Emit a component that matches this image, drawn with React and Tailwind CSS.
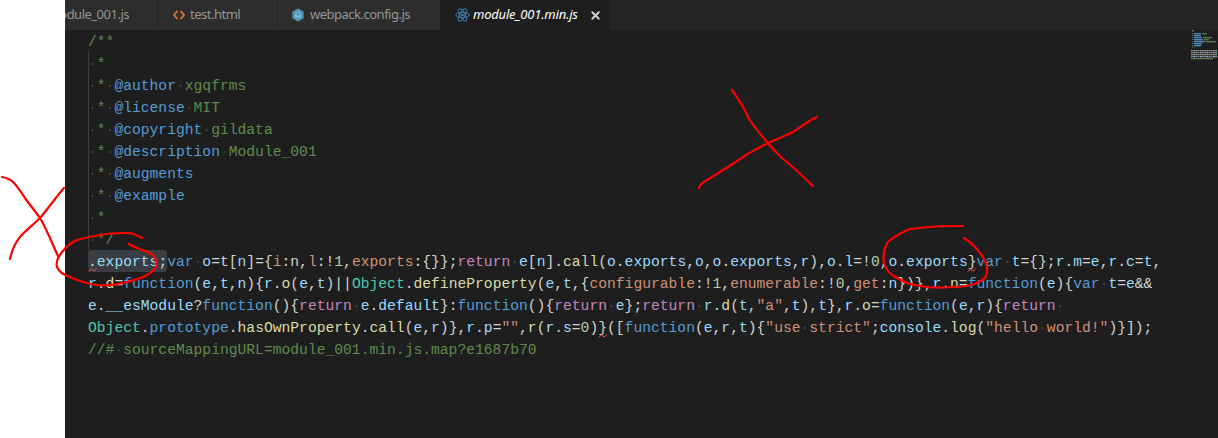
import React from "react";
import { X } from "lucide-react";

// token colours
const P = "text-[#d4d4d4]";
const V = "text-[#9cdcfe]";
const K = "text-[#569cd6]";
const F = "text-[#dcdcaa]";
const S = "text-[#ce9178]";
const R = "text-[#c586c0]";
const C = "text-[#4ec9b0]";
const N = "text-[#b5cea8]";
const G = "text-[#608b4e]";
const W = "text-[#454545]";

const docLines = [
  [[W, "·"], [G, "*"]],
  [[W, "·"], [G, "*"], [W, "·"], [K, "@author"], [W, "·"], [G, "xgqfrms"]],
  [[W, "·"], [G, "*"], [W, "·"], [K, "@license"], [W, "·"], [G, "MIT"]],
  [[W, "·"], [G, "*"], [W, "·"], [K, "@copyright"], [W, "·"], [G, "gildata"]],
  [[W, "·"], [G, "*"], [W, "·"], [K, "@description"], [W, "·"], [G, "Module_001"]],
  [[W, "·"], [G, "*"], [W, "·"], [K, "@augments"]],
  [[W, "·"], [G, "*"], [W, "·"], [K, "@example"]],
  [[W, "·"], [G, "*"]],
  [[W, "·"], [G, "*/"]],
];

const codeLines = [
  [
    [V, "o"], [P, "=t["], [V, "n"], [P, "]={"], [S, "i"], [P, ":n,"], [S, "l"], [P, ":!"], [N, "1"], [P, ","],
    [S, "exports"], [P, ":{}};"], [R, "return"], [W, "·"], [V, "e"], [P, "["], [V, "n"], [P, "]."], [F, "call"],
    [P, "("], [V, "o"], [P, "."], [V, "exports"], [P, ","], [V, "o"], [P, ","], [V, "o"], [P, "."], [V, "exports"],
    [P, ","], [V, "r"], [P, "),"], [V, "o"], [P, "."], [V, "l"], [P, "=!"], [N, "0"], [P, ","], [V, "o"], [P, "."],
    [V, "exports"], [P, "}"], [K, "var"], [W, "·"], [V, "t"], [P, "={};"], [V, "r"], [P, "."], [V, "m"], [P, "="],
    [V, "e"], [P, ","], [V, "r"], [P, "."], [V, "c"], [P, "="], [V, "t"], [P, ","],
  ],
  [
    [V, "r"], [P, "."], [F, "d"], [P, "="], [K, "function"], [P, "("], [V, "e"], [P, ","], [V, "t"], [P, ","], [V, "n"],
    [P, "){"], [V, "r"], [P, "."], [F, "o"], [P, "("], [V, "e"], [P, ","], [V, "t"], [P, ")||"], [C, "Object"], [P, "."],
    [F, "defineProperty"], [P, "("], [V, "e"], [P, ","], [V, "t"], [P, ",{"], [S, "configurable"], [P, ":!"], [N, "1"],
    [P, ","], [S, "enumerable"], [P, ":!"], [N, "0"], [P, ","], [S, "get"], [P, ":"], [V, "n"], [P, "})},"], [V, "r"],
    [P, "."], [F, "n"], [P, "="], [K, "function"], [P, "("], [V, "e"], [P, "){"], [K, "var"], [W, "·"], [V, "t"], [P, "="],
    [V, "e"], [P, "&&"],
  ],
  [
    [V, "e"], [P, "."], [V, "__esModule"], [P, "?"], [K, "function"], [P, "(){"], [R, "return"], [W, "·"], [V, "e"], [P, "."],
    [V, "default"], [P, "}:"], [K, "function"], [P, "(){"], [R, "return"], [W, "·"], [V, "e"], [P, "};"], [R, "return"],
    [W, "·"], [V, "r"], [P, "."], [F, "d"], [P, "("], [V, "t"], [P, ","], [S, '"a"'], [P, ","], [V, "t"], [P, "),"], [V, "t"],
    [P, "},"], [V, "r"], [P, "."], [F, "o"], [P, "="], [K, "function"], [P, "("], [V, "e"], [P, ","], [V, "r"], [P, "){"],
    [R, "return"], [W, "·"],
  ],
  [
    [C, "Object"], [P, "."], [K, "prototype"], [P, "."], [F, "hasOwnProperty"], [P, "."], [F, "call"], [P, "("], [V, "e"],
    [P, ","], [V, "r"], [P, ")},"], [V, "r"], [P, "."], [V, "p"], [P, "="], [S, '""'], [P, ","], [F, "r"], [P, "("], [V, "r"],
    [P, "."], [V, "s"], [P, "="], [N, "0"], [P, ")}(["], [K, "function"], [P, "("], [V, "e"], [P, ","], [V, "r"], [P, ","],
    [V, "t"], [P, "){"], [S, '"use'], [W, "·"], [S, 'strict"'], [P, ";"], [V, "console"], [P, "."], [F, "log"], [P, "("],
    [S, '"hello'], [W, "·"], [S, 'world!"'], [P, ")}]);"],
  ],
  [[G, "//#"], [W, "·"], [G, "sourceMappingURL=module_001.min.js.map?e1687b70"]],
];

const Tokens = ({ items }) =>
  items.map(([color, text], i) => (
    <span key={i} className={color}>
      {text}
    </span>
  ));

const CodeLine = ({ items, children }) => (
  <div className="h-[22px] leading-[24px] whitespace-pre">
    {children}
    <Tokens items={items} />
  </div>
);

const HtmlIcon = () => (
  <svg width="12" height="10" viewBox="0 0 12 10" fill="none" stroke="#e37933" strokeWidth="1.8">
    <path d="M4.5 1 1 5l3.5 4M7.5 1 11 5 7.5 9" />
  </svg>
);

const WebpackIcon = () => (
  <svg width="12" height="14" viewBox="0 0 12 14" fill="#519aba">
    <path d="M6 0.5 11.6 3.7v6.6L6 13.5.4 10.3V3.7z" />
    <path d="M6 3.6 9 5.3v3.4L6 10.4 3 8.7V5.3z" fill="#8fc7e0" />
    <path d="M6 3.6v6.8M3 5.3l3 1.7 3-1.7" stroke="#2b6c88" strokeWidth=".7" fill="none" />
  </svg>
);

const ReactIcon = () => (
  <svg width="15" height="14" viewBox="0 0 15 14" fill="none" stroke="#3f7fa6" strokeWidth="1">
    <ellipse cx="7.5" cy="7" rx="6.8" ry="2.6" />
    <ellipse cx="7.5" cy="7" rx="6.8" ry="2.6" transform="rotate(60 7.5 7)" />
    <ellipse cx="7.5" cy="7" rx="6.8" ry="2.6" transform="rotate(120 7.5 7)" />
    <circle cx="7.5" cy="7" r="1.3" fill="#3f7fa6" stroke="none" />
  </svg>
);

const Minimap = () => {
  const rows = [
    [33, 7, 5, "#4f86b8", "#5a7d48"],
    [35, 7, 0, "#4f86b8", "#5a7d48"],
    [37, 8, 9, "#4f86b8", "#5a7d48"],
    [39, 9, 5, "#4f86b8", "#5a7d48"],
    [41, 11, 10, "#4f86b8", "#5a7d48"],
    [43, 8, 0, "#4f86b8", "#5a7d48"],
    [45, 7, 0, "#4f86b8", "#5a7d48"],
  ];
  const mixed = ["#9a9a9a", "#6f9fc4", "#b98a72", "#8d7aa0", "#6fb3a0", "#9fb8c8"];
  return (
    <svg width="27" height="40" viewBox="1191 30 27 40" className="shrink-0">
      <rect x="1192" y="30" width="2" height="1.5" fill="#5a7d48" />
      {[33, 35, 37, 39, 41, 43, 45, 47].map((y) => (
        <rect key={y} x="1192" y={y} width="1.5" height="1" fill="#4f6b40" />
      ))}
      {rows.map(([y, a, b, c1, c2]) => (
        <g key={y}>
          <rect x="1194" y={y} width={a} height="1.4" fill={c1} />
          {b > 0 && <rect x={1195 + a} y={y} width={b} height="1.4" fill={c2} />}
        </g>
      ))}
      {[50, 52, 54, 56].map((y, r) =>
        Array.from({ length: 12 }).map((_, i) => (
          <rect
            key={`${y}-${i}`}
            x={1191 + i * 2.2}
            y={y}
            width="1.8"
            height="1.3"
            fill={mixed[(i * 2 + r * 3) % mixed.length]}
          />
        ))
      )}
      <rect x="1191" y="58" width="22" height="1.3" fill="#5a7d48" />
    </svg>
  );
};

const App = () => {
  return (
    <div className="relative flex h-[438px] w-[1218px] overflow-hidden bg-white">
      <div className="w-[65px] shrink-0" />

      <div className="flex min-w-0 flex-1 flex-col bg-[#1e1e1e]">
        {/* Tabs */}
        <div className="flex h-[30px] shrink-0 bg-[#252526] font-['Noto_Sans',sans-serif] text-[13px] text-[#969696]">
          <div className="flex w-[93px] items-center justify-end overflow-hidden border-r border-[#1e1e1e]/60 bg-[#2d2d2d] pr-[28px] tracking-[-0.5px]">
            <span className="whitespace-nowrap">module_001.js</span>
          </div>
          <div className="flex w-[120px] items-center gap-[5px] border-r border-[#252526] bg-[#2d2d2d] pl-[15px] tracking-[-0.5px]">
            <HtmlIcon />
            <span>test.html</span>
          </div>
          <div className="flex w-[162px] items-center gap-[6px] bg-[#2d2d2d] pl-[14px] tracking-[-0.5px]">
            <WebpackIcon />
            <span>webpack.config.js</span>
          </div>
          <div className="flex w-[170px] items-center gap-[3px] bg-[#1e1e1e] pl-[15px] tracking-[-0.2px] text-white">
            <ReactIcon />
            <span className="italic">module_001.min.js</span>
            <X size={13} strokeWidth={3.5} className="ml-[8px] text-[#d0d0d0]" />
          </div>
        </div>

        {/* Editor */}
        <div className="flex flex-1">
          <div className="min-w-0 flex-1 overflow-hidden pl-[23px] font-['Liberation_Mono',monospace] text-[14.67px]">
            <CodeLine items={[[G, "/**"]]} />
            <div className="shadow-[inset_1px_0_0_#404040]">
              {docLines.map((line, i) => (
                <CodeLine key={i} items={line} />
              ))}
            </div>
            <CodeLine items={codeLines[0]}>
              <span className="inline-block h-[22px] rounded-[3px] bg-[#3a3d41]">
                <span className={P}>.</span>
                <span className={V}>exports</span>
                <span className={P}>;</span>
              </span>
              <span className={K}>var</span>
              <span className={W}>·</span>
            </CodeLine>
            {codeLines.slice(1).map((line, i) => (
              <CodeLine key={i} items={line} />
            ))}
          </div>
          <Minimap />
        </div>
      </div>

      {/* Red marks drawn over the screenshot */}
      <svg
        className="pointer-events-none absolute inset-0"
        width="1218"
        height="438"
        viewBox="0 0 1218 438"
        fill="none"
        stroke="#ff0000"
        strokeWidth="2.2"
        strokeLinecap="round"
        strokeLinejoin="round"
      >
        <path d="M732 90C738 99 744 107 748 117C753 126 761 135 768 143C772 148 776 152 780 156C792 166 803 176 813 186" />
        <path d="M699 188C700 184 703 182 707 180C718 173 729 167 740 159C749 153 758 148 768 143C777 139 785 136 793 132C798 129 803 125 808 122C811 120 814 118 817 117" />
        <path d="M2 177C7 178 10 179 13 182C18 187 21 192 25 198C30 205 35 211 40 218C47 230 52 243 58 256" />
        <path d="M64 188C56 197 48 209 40 218C33 225 26 230 20 237C15 243 12 250 10 259" />
        <path d="M142 238C137 235 132 233 127 233C118 233 109 233 100 235C90 237 80 238 73 242C67 246 63 250 60 255C57 259 56 263 57 267C59 272 64 275 70 277C79 281 88 284 97 285C106 286 115 285 123 283C132 281 140 279 147 275C152 272 156 269 157 265C157 260 154 256 150 253C143 250 135 248 129 244" />
        <path d="M963 226C952 226 941 226 930 227C922 228 914 228 907 230C899 234 892 238 887 243C884 249 883 257 884 263C886 270 891 275 897 278C904 282 912 285 920 286C931 288 942 288 953 287C961 287 970 286 977 283C982 281 986 278 987 273C988 266 985 259 980 253C976 247 970 242 964 238" />
        <g stroke="#f14c4c" strokeWidth="1">
          <path d="M89 271l2.5-2 2.5 2 2.5-2" />
          <path d="M968 271l2.5-2 2.5 2 2.5-2" />
          <path d="M599 337l2.5-2 2.5 2 2.5-2" />
        </g>
      </svg>
    </div>
  );
};

export default App;
